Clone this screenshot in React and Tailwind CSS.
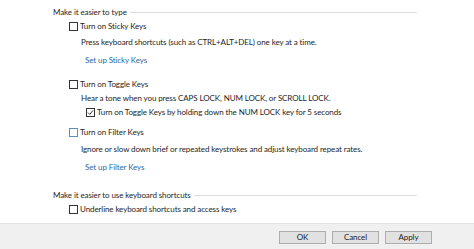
const Box = ({ checked, tint }) => (
  <span
    className={`inline-flex w-[9px] h-[9px] shrink-0 items-center justify-center border bg-white ${tint ? "border-[#5a8fc4]" : "border-[#333]"}`}
  >
    {checked && (
      <svg width="7" height="7" viewBox="0 0 7 7" fill="none">
        <path d="M1 3.6 L2.8 5.4 L6 1.4" stroke="#222" strokeWidth="0.9" />
      </svg>
    )}
  </span>
);

const Check = ({ label, checked, tint, className = "" }) => (
  <div className={`flex items-center gap-[2px] h-[12px] whitespace-nowrap ${className}`}>
    <Box checked={checked} tint={tint} />
    <span>{label}</span>
  </div>
);

const Heading = ({ children, className = "" }) => (
  <div className={`flex items-center h-[12px] whitespace-nowrap ${className}`}>
    <span className="pr-[3px]">{children}</span>
    <div className="flex-1 h-px bg-[#dcdcdc]" />
  </div>
);

const Text = ({ children, className = "" }) => (
  <div className={`h-[12px] leading-[12px] whitespace-nowrap ${className}`}>{children}</div>
);

const Button = ({ children }) => (
  <button className="w-[47px] h-[13px] border border-[#adadad] bg-[#e1e1e1] text-[8px] leading-[11px] text-[#222]">
    {children}
  </button>
);

export default function App() {
  return (
    <div className="w-[474px] h-[249px] bg-white flex flex-col text-[8px] tracking-[-0.1px] leading-[12px] text-[#1e1e1e] font-['Lato',sans-serif] overflow-hidden">
      <div className="h-[223px] pl-[53px] pr-[57px] pt-[6px]">
        <Heading>Make it easier to type</Heading>
        <div className="pl-[16px]">
          <Check className="mt-[2px]" label="Turn on Sticky Keys" />
          <Text className="mt-[4px] pl-[12px]">
            Press keyboard shortcuts (such as CTRL+ALT+DEL) one key at a time.
          </Text>
          <Text className="mt-[6px] pl-[16px] text-[#2b6aa6]">Set up Sticky Keys</Text>
          <Check className="mt-[12px]" label="Turn on Toggle Keys" />
          <Text className="mt-[2px] pl-[12px]">
            Hear a tone when you press CAPS LOCK, NUM LOCK, or SCROLL LOCK.
          </Text>
          <Check
            className="mt-[2px] pl-[17px]"
            checked
            label="Turn on Toggle Keys by holding down the NUM LOCK key for 5 seconds"
          />
          <Check className="mt-[8px]" tint label="Turn on Filter Keys" />
          <Text className="mt-[5px] pl-[12px]">
            Ignore or slow down brief or repeated keystrokes and adjust keyboard repeat rates.
          </Text>
          <Text className="mt-[6px] pl-[16px] text-[#2b6aa6]">Set up Filter Keys</Text>
        </div>
        <Heading className="mt-[16px]">Make it easier to use keyboard shortcuts</Heading>
        <div className="pl-[16px]">
          <Check className="mt-[2px]" label="Underline keyboard shortcuts and access keys" />
        </div>
      </div>
      <div className="flex-1 border-t border-[#dfdfdf] bg-[#f0f0f0] flex items-start justify-end gap-[6px] pt-[7px] pr-[42px]">
        <Button>OK</Button>
        <Button>Cancel</Button>
        <Button>Apply</Button>
      </div>
    </div>
  );
}
